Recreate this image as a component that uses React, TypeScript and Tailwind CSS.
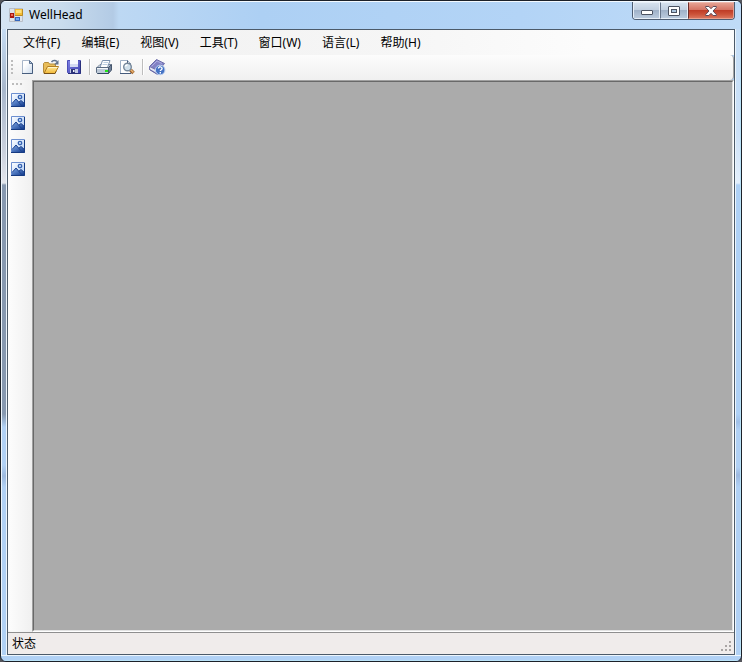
import type { ReactNode } from "react";

const menus = ["文件(F)", "编辑(E)", "视图(V)", "工具(T)", "窗口(W)", "语言(L)", "帮助(H)"];

const sideTools = ["图像 1", "图像 2", "图像 3", "图像 4"];

export default function App() {
  return (
    <div className="min-h-screen bg-[#55565c] font-['Noto_Sans','Noto_Sans_CJK_SC',sans-serif] text-xs text-black">
      <div className="flex min-h-screen flex-col overflow-hidden rounded-md border border-[#1c2129] bg-[#b1d1f5]">
        <TitleBar />
        <div className="flex flex-1">
          <div className="w-1.5 shrink-0 border-x border-x-[#edf5fc] bg-[linear-gradient(to_bottom,#c6dcf3_0px,#a9b8cc_60px,#c9d0dc_120px,#e3e6ec_154px,#8799b1_156px,#8799b1_385px,#b1d1f5_398px,#b1d1f5_436px,#9db9de_447px,#b1d1f5_458px)]" />
          <main className="flex min-w-0 flex-1 flex-col border border-[#4c5a69]">
            <MenuBar />
            <ToolBar />
            <div className="flex min-h-0 flex-1 bg-[#f2f2f2]">
              <SideBar />
              <section
                aria-label="工作区"
                className="flex-1 border border-t-[#a0a0a0] border-r-white border-b-white border-l-[#a0a0a0]"
              >
                <div className="h-full border border-t-[#696969] border-r-[#e3e3e3] border-b-[#e3e3e3] border-l-[#696969] bg-[#ababab]" />
              </section>
            </div>
            <StatusBar />
          </main>
          <div className="w-1.5 shrink-0 border-x border-l-[#edf5fc] border-r-[#b9e2f8] bg-[linear-gradient(to_bottom,#c5def7_0px,#cce1f8_100px,#e3effc_154px,#afd1f6_156px,#afd1f6_385px,#a0c0e8_393px,#b1d1f5_401px,#b1d1f5_438px,#9db9e0_446px,#b1d1f5_458px)]" />
        </div>
        <div className="h-1.5 shrink-0 border-y border-t-[#edf5fc] border-b-[#b9e2f8]" />
      </div>
    </div>
  );
}

function TitleBar() {
  return (
    <header className="flex h-7 shrink-0 items-start justify-between border-t border-[#f4faff] bg-[linear-gradient(to_right,#d5e4f3_0px,#c9dced_60px,#b3cbe5_112px,#bdd8f3_118px,#add0f4_260px,#b3d4f6_520px,#bfdbf7_100%)] pr-1.5 pl-2">
      <div className="flex h-[26px] items-center gap-1">
        <AppIcon />
        <h1 className="text-xs leading-4">WellHead</h1>
      </div>
      <div className="flex h-[18px] overflow-hidden rounded-b border-x border-b border-[#4d5d72]">
        <button
          aria-label="最小化"
          className="flex w-[27px] items-center justify-center border border-[#e6eef7] bg-[linear-gradient(#d5e1ee_0%,#c2d0e1_45%,#9eb0c7_46%,#b9cadd_100%)]"
          type="button"
        >
          <svg className="mt-1 h-[5px] w-3" viewBox="0 0 12 5">
            <rect x=".5" y=".5" width="11" height="4" rx=".5" fill="#fff" stroke="#4b5362" />
          </svg>
        </button>
        <button
          aria-label="最大化"
          className="flex w-[28px] items-center justify-center border border-l-[#66758a] border-t-[#e6eef7] border-r-[#e6eef7] border-b-[#e6eef7] bg-[linear-gradient(#d5e1ee_0%,#c2d0e1_45%,#9eb0c7_46%,#b9cadd_100%)]"
          type="button"
        >
          <svg className="h-2.5 w-3" viewBox="0 0 12 10">
            <rect x=".5" y=".5" width="11" height="9" rx=".5" fill="#fff" stroke="#4b5362" />
            <rect x="3.5" y="3.5" width="5" height="3" fill="#a9c4dd" stroke="#4b5362" />
          </svg>
        </button>
        <button
          aria-label="关闭"
          className="flex w-[46px] items-center justify-center border border-l-[#6b2d2b] border-t-[#edb9ae] border-r-[#e3a093] border-b-[#e9a08c] bg-[linear-gradient(#e5a192_0%,#d47464_45%,#bd3a24_46%,#cc5339_75%,#d9735b_100%)]"
          type="button"
        >
          <svg className="h-2.5 w-3" viewBox="0 0 12 10">
            <path
              d="M.7.5h3.2L6 2.700 8.100.5h3.200v1L8 5l3.300 3.500v1H8.100L6 7.300 3.900 9.500H.7v-1L4 5 .7 1.500z"
              fill="#fff"
              stroke="#5c4a58"
            />
          </svg>
        </button>
      </div>
    </header>
  );
}

function MenuBar() {
  return (
    <nav className="flex h-[25px] shrink-0 items-center gap-[5px] bg-[linear-gradient(to_right,#f0f0f0,#f6f6f6_55%,#fcfcfc_80%)] pl-[7px]">
      {menus.map((label) => (
        <button className="px-2 leading-5 whitespace-nowrap hover:bg-[#cfe3f8]" key={label} type="button">
          {label}
        </button>
      ))}
    </nav>
  );
}

function ToolBar() {
  return (
    <div
      className="flex h-[25px] shrink-0 items-center rounded-r border-r border-[#a5a5a5] bg-linear-to-b from-[#fcfcfc] to-[#f0f0f0] pb-px pl-0.5"
      role="toolbar"
    >
      <svg className="mr-[3px] h-4 w-1" viewBox="0 0 4 16">
        <path d="M1 1h2v2H1zM1 5h2v2H1zM1 9h2v2H1zM1 13h2v2H1z" fill="#bdbdbd" />
      </svg>
      <ToolButton label="新建">
        <NewIcon />
      </ToolButton>
      <ToolButton label="打开">
        <OpenIcon />
      </ToolButton>
      <ToolButton label="保存">
        <SaveIcon />
      </ToolButton>
      <Separator />
      <ToolButton label="打印">
        <PrintIcon />
      </ToolButton>
      <ToolButton label="打印预览">
        <PreviewIcon />
      </ToolButton>
      <Separator />
      <ToolButton label="帮助">
        <HelpIcon />
      </ToolButton>
    </div>
  );
}

function ToolButton({ label, children }: { label: string; children: ReactNode }) {
  return (
    <button
      aria-label={label}
      className="flex h-[22px] w-[23px] shrink-0 items-center pl-[3px] hover:bg-[#cfe3f8]"
      title={label}
      type="button"
    >
      {children}
    </button>
  );
}

function Separator() {
  return <div className="mr-0.5 ml-[3px] h-4 w-0.5 border-r border-l border-r-white border-l-[#bdbdbd]" />;
}

function SideBar() {
  return (
    <aside className="flex w-6 shrink-0 flex-col items-start rounded-b bg-linear-to-r from-[#fdfdfd] to-[#f0f0f0] pl-0.5">
      <svg className="my-0.5 ml-0.5 h-1 w-4 shrink-0" viewBox="0 0 16 4">
        <path d="M0 1h2v2H0zM4 1h2v2H4zM8 1h2v2H8z" fill="#bdbdbd" />
      </svg>
      {sideTools.map((label) => (
        <button
          aria-label={label}
          className="flex h-[23px] w-4 shrink-0 items-start pt-1 hover:bg-[#cfe3f8]"
          key={label}
          title={label}
          type="button"
        >
          <PictureIcon />
        </button>
      ))}
    </aside>
  );
}

function StatusBar() {
  return (
    <footer className="flex h-[22px] shrink-0 items-center justify-between border-t border-[#8f8f8f] bg-[#f0eceb] pl-1">
      <span className="leading-5">状态</span>
      <svg className="mr-0.5 mb-0.5 h-3 w-3 self-end" viewBox="0 0 12 12">
        <path d="M9 1h2v2H9zM9 5h2v2H9zM5 5h2v2H5zM9 9h2v2H9zM5 9h2v2H5zM1 9h2v2H1z" fill="#a9a5a4" />
      </svg>
    </footer>
  );
}

function AppIcon() {
  return (
    <svg className="h-4 w-4" viewBox="0 0 16 16">
      <path d="M.5 1.500h13v13H.5z" fill="#dde3ea" stroke="#b9bfc8" />
      <path d="M0 8.500h6M5.500 1v14" stroke="#b3b8c0" />
      <path d="M6 2h7.500v7H6z" fill="#f4bd33" />
      <path d="M7 3h5.500v3H7z" fill="#fde07e" />
      <path d="M6 8.500h7.500V2" fill="none" stroke="#b98a25" />
      <path d="M1 6h4v5H1z" fill="#a81810" />
      <path d="M2 7h2v2H2z" fill="#ee6a52" />
      <path d="M6 10h5v4H6z" fill="#3567bd" />
      <path d="M7 11h3v2H7z" fill="#74abf0" />
    </svg>
  );
}

function NewIcon() {
  return (
    <svg className="h-4 w-4" viewBox="0 0 16 16">
      <defs>
        <linearGradient id="paper" x1="0" y1="0" x2="1" y2="1">
          <stop offset=".3" stopColor="#fff" />
          <stop offset="1" stopColor="#c9d8ea" />
        </linearGradient>
      </defs>
      <path d="M2.500 1.500h7l3 3v10h-10z" fill="url(#paper)" stroke="#a9b7ca" />
      <path d="M12.500 4v10.500H2" fill="none" stroke="#465c7d" />
      <path d="M9.500 1.500v3h3z" fill="#b9c9de" stroke="#5c7291" />
    </svg>
  );
}

function OpenIcon() {
  return (
    <svg className="h-4 w-4" viewBox="0 0 16 16">
      <defs>
        <linearGradient id="folder" x1="0" y1="0" x2="0" y2="1">
          <stop offset="0" stopColor="#ffeaa0" />
          <stop offset="1" stopColor="#f2b733" />
        </linearGradient>
      </defs>
      <path d="M.5 13.500v-9l1-1h4l1 1.500h6v8.500z" fill="#e9bd58" stroke="#b58c3c" />
      <path d="m1 14.500 3.500-7h11l-3.500 7z" fill="url(#folder)" stroke="#b27f22" />
      <path d="M5 8.500h9.500" stroke="#fff6cc" />
      <path d="M1 14.500h11l1-2" fill="none" stroke="#765019" />
      <path d="M8.500 3c1.500-2 4-2 5.500-.5" fill="none" stroke="#61738e" strokeWidth="1.500" />
      <path d="M15.500 1v4.500H11z" fill="#61738e" />
    </svg>
  );
}

function SaveIcon() {
  return (
    <svg className="h-4 w-4" viewBox="0 0 16 16">
      <defs>
        <linearGradient id="disk" x1="0" y1="0" x2="1" y2="1">
          <stop offset="0" stopColor="#8183e6" />
          <stop offset="1" stopColor="#3b3fad" />
        </linearGradient>
      </defs>
      <path d="M1.500 1.500h13v13h-12l-1-1z" fill="url(#disk)" stroke="#4c4eb8" />
      <path d="M4 1h8v7H4z" fill="#f6f8ff" />
      <path d="M4 5h8v3H4z" fill="#d3daf3" />
      <path d="M14.500 2v12.500H2" fill="none" stroke="#29307c" />
      <path d="M4 10h8v4H4z" fill="#c3cae5" />
      <path d="M5 10h4v4H5z" fill="#2c3277" />
      <path d="M7 11h1.500v2H7z" fill="#f4f6fd" />
    </svg>
  );
}

function PrintIcon() {
  return (
    <svg className="h-4 w-4" viewBox="0 0 16 16">
      <path d="m1 8.500 3-3h11l-2.500 3z" fill="#d5dde6" stroke="#73849a" />
      <path d="M4 8.500 6.500 1.500H14l-2.500 7z" fill="#fff" stroke="#7b91ae" />
      <path d="M7.500 3.500H12M6.500 5.500h5" stroke="#bdcfe2" />
      <path d="M.5 8.500h12v6h-11l-1-1z" fill="#bdc9d7" stroke="#5b6c82" />
      <path d="m12.500 8.500 3-3v5.500l-3 3.500z" fill="#6d7f97" stroke="#46566c" />
      <path d="M1 9.500h11" stroke="#f4f7fa" />
      <path d="M9 11h3v2H9z" fill="#20e516" />
      <path d="M1.500 14.500H12.500" stroke="#33455e" />
    </svg>
  );
}

function PreviewIcon() {
  return (
    <svg className="h-4 w-4" viewBox="0 0 16 16">
      <path d="M1.500 1.500h7l3 3v10h-10z" fill="#fff" stroke="#9fb0c6" />
      <path d="M8.500 1.500v3h3M1 14.500h11" fill="none" stroke="#465c7d" />
      <path d="m11.500 11 3 3" stroke="#96602e" strokeWidth="3.500" />
      <path d="m11.500 10.500 3 3" stroke="#eeb26c" strokeWidth="1.500" />
      <circle cx="8.500" cy="8" r="3.800" fill="#cfdfea" stroke="#75879a" strokeWidth="1.400" />
      <path d="M6.500 7.500c0-1 .8-1.600 2-1.500" fill="none" stroke="#fff" strokeWidth="1.500" />
    </svg>
  );
}

function HelpIcon() {
  return (
    <svg className="h-4 w-4 overflow-visible" viewBox="0 0 16 16">
      <path d="M.5 7.500 7.500.5l8 4-6 7z" fill="#8282c4" stroke="#6c6ca8" />
      <path d="m2.500 7.500 5.500-5.500 5 2.500" fill="none" stroke="#aeaee0" />
      <path d="M.5 7.500v3l8 4.500v-3.500z" fill="#e3e6f3" stroke="#7878b2" />
      <path d="m.5 10.500 8 5" stroke="#6464a4" />
      <circle cx="11.200" cy="11" r="4.800" fill="#4472c4" stroke="#c3d5f2" />
      <path
        d="M9.500 9.500c0-2.300 3.600-2.200 3.600.1 0 1.200-1.800 1.200-1.800 2.500M11.300 13v1.400"
        fill="none"
        stroke="#fff"
        strokeWidth="1.400"
      />
    </svg>
  );
}

function PictureIcon() {
  return (
    <svg className="h-4 w-4" viewBox="0 0 16 16">
      <defs>
        <linearGradient id="sky" x1="0" y1="0" x2="1" y2="1">
          <stop offset="0" stopColor="#fff" />
          <stop offset="1" stopColor="#a9c9f4" />
        </linearGradient>
        <linearGradient id="hill" x1="0" y1="0" x2="1" y2="1">
          <stop offset="0" stopColor="#7fa9e8" />
          <stop offset="1" stopColor="#0d3588" />
        </linearGradient>
      </defs>
      <path d="M1.500 1.500h13v13h-13z" fill="url(#sky)" stroke="#6c8fd0" />
      <path d="M2 11.500 6 7l3 3 2-1.500 3.500 3v3H2z" fill="url(#hill)" />
      <path d="m2 11.500 4-4.500 6 7M9 10l2-1.500 3.500 3" fill="none" stroke="#1e438e" />
      <circle cx="10" cy="5" r="1.700" fill="#cfe1f8" stroke="#3562b2" strokeWidth="1.300" />
      <path d="M14.500 2v12.500H1" fill="none" stroke="#173b82" />
    </svg>
  );
}
